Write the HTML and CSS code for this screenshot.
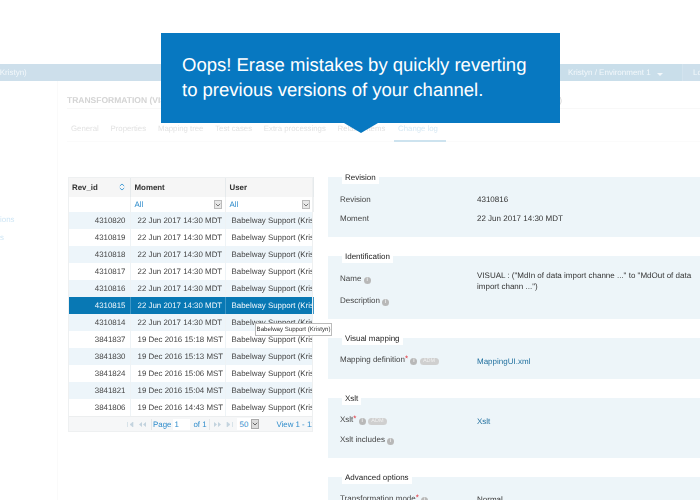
FILE: index.html
```html
<!DOCTYPE html>
<html lang="en">
<head>
<meta charset="utf-8">
<title>Change log</title>
<link rel="stylesheet" href="styles.css">
</head>
<body>
<div class="page">
  <header class="topbar">
    <span class="top-left">(Kristyn)</span>
    <div class="top-right">
      <span class="env">Kristyn / Environment 1 <i class="caret"></i></span>
      <span class="logout">Logout</span>
    </div>
  </header>
  <div class="main">
    <aside class="sidebar">
      <div class="side-item">ions</div>
      <div class="side-item">s</div>
    </aside>
    <div class="content">
      <div class="title"><span>TRANSFORMATION (VISUAL</span><span class="title-end">)</span></div>
      <nav class="tabs">
        <span class="tab">General</span>
        <span class="tab">Properties</span>
        <span class="tab">Mapping tree</span>
        <span class="tab">Test cases</span>
        <span class="tab">Extra processings</span>
        <span class="tab">Related items</span>
        <span class="tab active">Change log</span>
      </nav>
      <div class="columns">
        <div class="grid">
          <table>
            <colgroup><col class="c1"><col class="c2"><col class="c3"></colgroup>
            <thead>
              <tr class="head">
                <th><div class="th-in">Rev_id<svg class="sort" width="6" height="8" viewBox="0 0 6 8"><path d="M.8 3 3 1l2.2 2M.8 5 3 7l2.2-2" fill="none" stroke="#4b9fd6" stroke-width="1"/></svg></div></th>
                <th>Moment</th>
                <th>User</th>
              </tr>
              <tr class="filter">
                <td></td>
                <td><div class="f-in">All<span class="f-btn"><svg width="6" height="4" viewBox="0 0 6 4"><path d="M.8.8 3 3 5.2.8" fill="none" stroke="#777" stroke-width="1"/></svg></span></div></td>
                <td><div class="f-in">All<span class="f-btn"><svg width="6" height="4" viewBox="0 0 6 4"><path d="M.8.8 3 3 5.2.8" fill="none" stroke="#777" stroke-width="1"/></svg></span></div></td>
              </tr>
            </thead>
            <tbody>
              <tr class="alt"><td class="num">4310820</td><td class="mom">22 Jun 2017 14:30 MDT</td><td class="usr">Babelway Support (Kristyn)</td></tr>
              <tr><td class="num">4310819</td><td class="mom">22 Jun 2017 14:30 MDT</td><td class="usr">Babelway Support (Kristyn)</td></tr>
              <tr class="alt"><td class="num">4310818</td><td class="mom">22 Jun 2017 14:30 MDT</td><td class="usr">Babelway Support (Kristyn)</td></tr>
              <tr><td class="num">4310817</td><td class="mom">22 Jun 2017 14:30 MDT</td><td class="usr">Babelway Support (Kristyn)</td></tr>
              <tr class="alt"><td class="num">4310816</td><td class="mom">22 Jun 2017 14:30 MDT</td><td class="usr">Babelway Support (Kristyn)</td></tr>
              <tr class="sel"><td class="num">4310815</td><td class="mom">22 Jun 2017 14:30 MDT</td><td class="usr">Babelway Support (Kristyn)</td></tr>
              <tr class="alt"><td class="num">4310814</td><td class="mom">22 Jun 2017 14:30 MDT</td><td class="usr">Babelway Support (Kristyn)</td></tr>
              <tr><td class="num">3841837</td><td class="mom">19 Dec 2016 15:18 MST</td><td class="usr">Babelway Support (Kristyn)</td></tr>
              <tr class="alt"><td class="num">3841830</td><td class="mom">19 Dec 2016 15:13 MST</td><td class="usr">Babelway Support (Kristyn)</td></tr>
              <tr><td class="num">3841824</td><td class="mom">19 Dec 2016 15:06 MST</td><td class="usr">Babelway Support (Kristyn)</td></tr>
              <tr class="alt"><td class="num">3841821</td><td class="mom">19 Dec 2016 15:04 MST</td><td class="usr">Babelway Support (Kristyn)</td></tr>
              <tr><td class="num">3841806</td><td class="mom">19 Dec 2016 14:43 MST</td><td class="usr">Babelway Support (Kristyn)</td></tr>
            </tbody>
          </table>
          <div class="pager">
            <svg class="pg-ic first" width="7" height="5" viewBox="0 0 7 5"><path d="M.5 0v5M6 0 3 2.5 6 5z" fill="#c3d3de" stroke="#c3d3de" stroke-width=".6"/></svg>
            <svg class="pg-ic" width="8" height="5" viewBox="0 0 8 5"><path d="M4 0 1 2.5 4 5zM8 0 5 2.5 8 5z" fill="#c3d3de"/></svg>
            <span class="pg-sep"></span>
            <span class="pg-txt">Page</span>
            <span class="pg-input">1</span>
            <span class="pg-txt">of 1</span>
            <span class="pg-sep second"></span>
            <svg class="pg-ic" width="8" height="5" viewBox="0 0 8 5"><path d="M0 0l3 2.5L0 5zM4 0l3 2.5L4 5z" fill="#c3d3de"/></svg>
            <svg class="pg-ic" width="7" height="5" viewBox="0 0 7 5"><path d="M6.5 0v5M1 0l3 2.5L1 5z" fill="#c3d3de" stroke="#c3d3de" stroke-width=".6"/></svg>
            <span class="pg-sel">50<span class="pg-btn"><svg width="6" height="4" viewBox="0 0 6 4"><path d="M.8.8 3 3 5.2.8" fill="none" stroke="#666" stroke-width="1"/></svg></span></span>
            <span class="pg-view">View 1 - 12 of 12</span>
          </div>
        </div>
        <div class="details">
          <section class="box">
            <h3 class="legend">Revision</h3>
            <div class="row"><div class="lab">Revision</div><div class="val">4310816</div></div>
            <div class="row"><div class="lab">Moment</div><div class="val">22 Jun 2017 14:30 MDT</div></div>
          </section>
          <section class="box">
            <h3 class="legend">Identification</h3>
            <div class="row tall"><div class="lab">Name <i class="info">i</i></div><div class="val multi">VISUAL : ("MdIn of data import channe ..." to "MdOut of data<br>import chann ...")</div></div>
            <div class="row"><div class="lab">Description <i class="info">i</i></div><div class="val"></div></div>
          </section>
          <section class="box">
            <h3 class="legend">Visual mapping</h3>
            <div class="row"><div class="lab up">Mapping definition<b class="req">*</b> <i class="info">i</i> <i class="adm">ADM</i></div><div class="val link">MappingUI.xml</div></div>
          </section>
          <section class="box">
            <h3 class="legend">Xslt</h3>
            <div class="row"><div class="lab up">Xslt<b class="req">*</b> <i class="info">i</i> <i class="adm">ADM</i></div><div class="val link">Xslt</div></div>
            <div class="row"><div class="lab">Xslt includes <i class="info">i</i></div><div class="val"></div></div>
          </section>
          <section class="box">
            <h3 class="legend">Advanced options</h3>
            <div class="row"><div class="lab up">Transformation mode<b class="req">*</b> <i class="info">i</i></div><div class="val">Normal</div></div>
          </section>
        </div>
      </div>
    </div>
  </div>
  <div class="tooltip">Babelway Support (Kristyn)</div>
  <div class="callout">Oops! Erase mistakes by quickly reverting<br>to previous versions of your channel.</div>
</div>
</body>
</html>
```
FILE: styles.css
```css
* { box-sizing: border-box; }
html, body { margin: 0; padding: 0; }
body { background: #fff; font-family: "Liberation Sans", Arial, sans-serif; color: #444; text-rendering: geometricPrecision; }
.page { position: relative; width: 700px; height: 500px; overflow: hidden; filter: blur(.3px); }

.topbar { margin-top: 64px; height: 17px; background: #cddfeb; display: flex; justify-content: space-between; align-items: stretch; color: #f3f8fb; font-size: 8px; line-height: 17px; }
.top-left { margin-left: -3px; }
.top-right { display: flex; }
.env { width: 123px; padding-left: 8px; background: #c9deea; white-space: nowrap; border-right: 1px solid #d3e3ee; }
.caret { display: inline-block; width: 0; height: 0; margin-left: 4px; vertical-align: -1px; border: 3px solid transparent; border-top-color: #f3f8fb; border-bottom: 0; }
.logout { width: 17px; padding-left: 10px; overflow: hidden; white-space: nowrap; }

.main { display: flex; height: 419px; }
.sidebar { width: 58px; flex: none; border-right: 1px solid #fafafa; padding-top: 133px; }
.side-item { height: 18px; line-height: 12px; font-size: 7.9px; color: #cfe6f5; }
.content { flex: 1; min-width: 0; padding-left: 9px; }

.title { height: 28px; line-height: 38px; padding-right: 138px; border-bottom: 1px solid #f8f8f8; font-size: 8.5px; font-weight: bold; color: #d4d4d4; display: flex; justify-content: space-between; }
.title-end { font-weight: normal; }
.tabs { display: flex; height: 33px; padding-left: 4px; gap: 11.8px; border-bottom: 1px solid #fbfbfb; }
.tab { font-size: 7.8px; line-height: 39px; color: #e2e2e2; white-space: nowrap; height: 33px; }
.tab.active { color: #d6e8f3; border-bottom: 2px solid #cde3ef; margin-left: -3px; padding-left: 4px; width: 52px; }

.columns { display: flex; gap: 15px; padding: 35px 0 0 1px; align-items: flex-start; }

.grid { width: 245px; flex: none; outline: 1px solid #eef0f1; outline-offset: -1px; }
table { width: 245px; table-layout: fixed; border-collapse: collapse; font-size: 7.9px; }
.c1 { width: 62px; }
.c2 { width: 95px; }
.c3 { width: 88px; }
.head th { height: 20px; padding: 0 0 0 4px; text-align: left; font-size: 7.9px; font-weight: bold; color: #333; background: #f6f6f6; border-right: 1px solid #e6eaec; }
.th-in { display: flex; justify-content: space-between; align-items: center; padding-right: 5px; }
.filter td { height: 15px; padding: 0 3px 0 4px; background: #fff; border-right: 1px solid #eef0f1; color: #2f8ccb; }
.f-in { display: flex; justify-content: space-between; align-items: center; }
.f-btn { width: 8px; height: 9px; background: #e8e8e8; border: 1px solid #bbb; display: flex; align-items: center; justify-content: center; }
tbody tr { height: 17px; background: #fff; }
tbody tr.alt { background: #edf5fa; }
tbody td { padding: 0; overflow: hidden; white-space: nowrap; border-right: 1px solid #eef3f6; color: #444; line-height: 17px; }
td.num { text-align: right; padding-right: 4px; }
td.mom { padding-left: 7px; }
td.usr { padding-left: 6px; border-right: 0; }
tr.sel { background: #0878b4; }
tbody tr.sel td { color: #f2f8fc; border-right: 1px solid #3f97c6; }

.pager { height: 16px; width: 245px; background: #f6f7f8; border: 1px solid #eceeef; display: flex; align-items: center; font-size: 7.9px; color: #2f8ccb; padding-left: 58px; white-space: nowrap; overflow: hidden; }
.pg-ic { flex: none; margin-right: 4px; }
.pg-sep { width: 1px; height: 11px; background: #e3e6e8; margin: 0 1px 0 1px; flex: none; }
.pg-sep.second { margin-right: 4px; margin-left: 2px; }
.pg-txt { flex: none; }
.pg-input { width: 17px; height: 11px; line-height: 11px; margin: 0 3px 0 2px; padding-left: 1px; background: #fff; flex: none; }
.pg-sel { display: flex; align-items: center; background: #fff; padding-left: 3px; height: 12px; gap: 3px; flex: none; }
.pg-btn { width: 8px; height: 10px; background: #dcdcdc; border: 1px solid #aaa; display: flex; align-items: center; justify-content: center; }
.pg-view { margin-left: 17px; flex: none; }

.details { flex: 1; min-width: 0; }
.box { background: #edf5f9; padding-bottom: 9px; margin-bottom: 19px; }
.legend { margin: 0 0 1px 14px; padding: 0 3px; width: fit-content; height: 12px; position: relative; top: -5px; background: #fff; font-size: 8px; line-height: 12px; font-weight: normal; color: #222; }
.row { display: grid; grid-template-columns: 137px 1fr; padding: 0 12px; align-items: start; font-size: 8px; }
.row.tall { height: 22px; }
.lab { line-height: 19px; height: 19px; color: #444; white-space: nowrap; }
.lab.up { margin-top: -1px; }
.val { line-height: 18px; padding-top: 1px; min-height: 19px; color: #333; white-space: nowrap; }
.val.multi { line-height: 11px; }
.val.link { color: #1f6f9e; line-height: 17px; padding-top: 2px; }
.req { color: #e0202a; font-weight: normal; position: relative; top: -1px; }
.info { display: inline-block; width: 7px; height: 7px; border-radius: 50%; background: #b8b8b8; color: #fff; font: normal 6px/7px "Liberation Sans", sans-serif; text-align: center; }
.adm { display: inline-block; width: 19px; height: 7px; border-radius: 4px; background: #cfcfcf; color: #efefef; font: normal 5.5px/7px "Liberation Sans", sans-serif; text-align: center; }

.tooltip { position: absolute; left: 255px; top: 323px; width: 77px; height: 13px; line-height: 11px; background: #fff; border: 1px solid #bbb; font-size: 6.1px; color: #333; text-align: center; white-space: nowrap; }
.callout { position: absolute; left: 161px; top: 33px; width: 399px; height: 90px; padding: 20px 0 0 21px; background: #0778c1; color: #fff; font-size: 18.5px; line-height: 24.5px; white-space: nowrap; }
.callout::after { content: ""; position: absolute; left: 183px; top: 90px; width: 0; height: 0; border-style: solid; border-width: 10px 17px 0; border-color: #0778c1 transparent transparent; }
```
